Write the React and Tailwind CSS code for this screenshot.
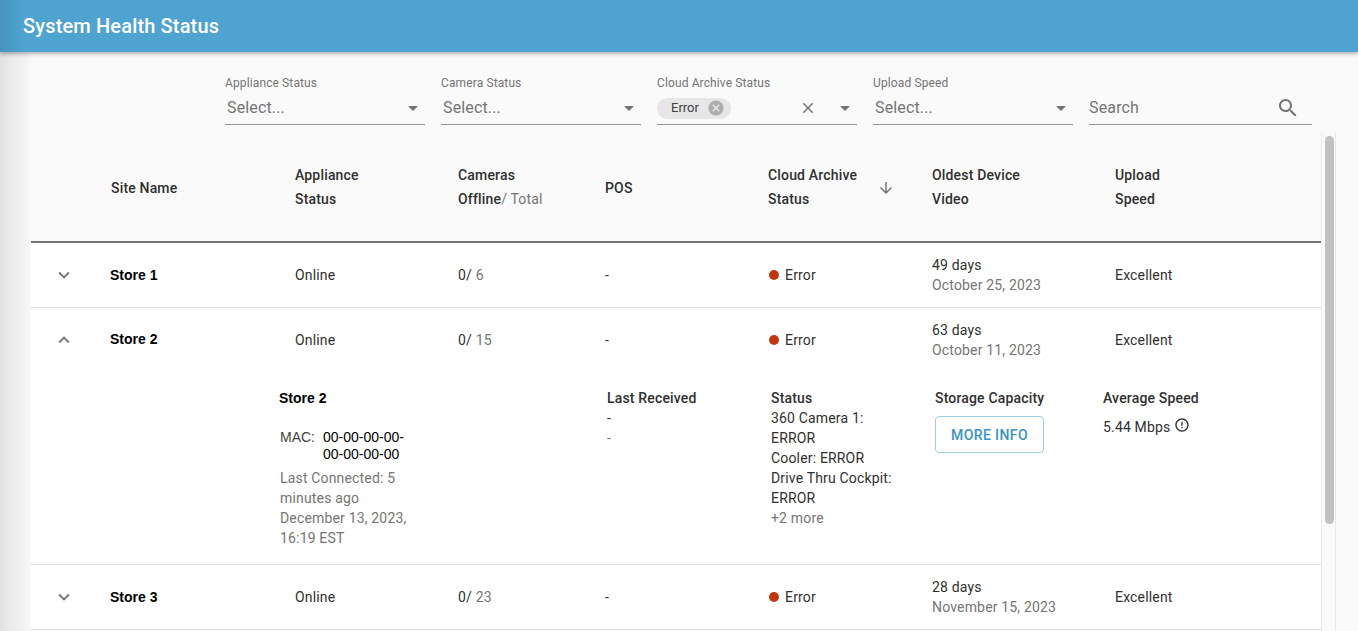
import React from "react";

const Icon = ({ d, className }) => (
  <svg viewBox="0 0 24 24" fill="currentColor" className={className}>
    <path d={d} />
  </svg>
);

const paths = {
  more: "M16.59 8.59 12 13.17 7.41 8.59 6 10l6 6 6-6z",
  less: "m12 8-6 6 1.41 1.41L12 10.83l4.59 4.58L18 14z",
  down: "M20 12l-1.41-1.41L13 16.17V4h-2v12.17l-5.58-5.59L4 12l8 8 8-8z",
  search:
    "M15.5 14h-.79l-.28-.27C15.41 12.59 16 11.11 16 9.5 16 5.91 13.09 3 9.5 3S3 5.91 3 9.5 5.91 16 9.5 16c1.61 0 3.09-.59 4.23-1.57l.27.28v.79l5 4.99L20.49 19l-4.99-5zm-6 0C7.01 14 5 11.99 5 9.5S7.01 5 9.5 5 14 7.01 14 9.5 11.99 14 9.5 14z",
  cancel:
    "M12 2C6.47 2 2 6.47 2 12s4.47 10 10 10 10-4.47 10-10S17.53 2 12 2zm5 13.59L15.59 17 12 13.41 8.41 17 7 15.59 10.59 12 7 8.41 8.41 7 12 10.59 15.59 7 17 8.41 13.41 12 17 15.59z",
  clear:
    "M19 6.41 17.59 5 12 10.59 6.41 5 5 6.41 10.59 12 5 17.59 6.41 19 12 13.41 17.59 19 19 17.59 13.41 12z",
  info: "M11 15h2v2h-2zm0-8h2v6h-2zm.99-5C6.47 2 2 6.48 2 12s4.47 10 9.99 10C17.52 22 22 17.52 22 12S17.52 2 11.99 2zM12 20c-4.42 0-8-3.58-8-8s3.58-8 8-8 8 3.58 8 8-3.58 8-8 8z",
};

const gridCols = "grid grid-cols-[79px_185px_163px_147px_163px_163px_184px_1fr]";

const Caret = () => (
  <span className="w-0 h-0 border-x-[5px] border-x-transparent border-t-[5px] border-t-[#757575]" />
);

const Filter = ({ label, children, clearable }) => (
  <div className="w-[200px] flex flex-col">
    <span className="text-xs leading-[14px] tracking-[0.12px] text-[#757575]">{label}</span>
    <div className="h-[28px] mt-[7px] pb-[5px] flex items-center border-b border-[#949494]">
      <div className="flex-1 min-w-0 flex items-center">
        {children || <span className="text-base tracking-[0.15px] text-[#757575] pl-[2px]">Select...</span>}
      </div>
      {clearable && <Icon d={paths.clear} className="w-[18px] h-[18px] text-[#757575] mr-[23px]" />}
      <span className="mr-[7px] flex">
        <Caret />
      </span>
    </div>
  </div>
);

const stores = [
  { name: "Store 1", total: 6, days: "49 days", date: "October 25, 2023" },
  { name: "Store 2", total: 15, days: "63 days", date: "October 11, 2023", open: true },
  { name: "Store 3", total: 23, days: "28 days", date: "November 15, 2023" },
];

const Details = () => (
  <div className="pl-[248px] pb-4 pt-[16px] grid grid-cols-[328px_164px_164px_168px_1fr] text-sm leading-5 tracking-[0.17px] text-[#303030]">
    <div>
      <div className="font-['Liberation_Sans'] font-bold tracking-normal text-black">Store 2</div>
      <div className="w-[140px] mt-[21px] ml-px">
        <div className="flex gap-2 font-['Liberation_Sans'] leading-[17px] tracking-normal">
          <span className="text-[#424242]">MAC:</span>
          <span className="text-black w-[90px]">00-00-00-00-00-00-00-00</span>
        </div>
        <div className="mt-[5px] text-[#757575]">Last Connected: 5 minutes ago December 13, 2023, 16:19 EST</div>
      </div>
    </div>
    <div>
      <div className="font-medium">Last Received</div>
      <div>-</div>
      <div className="text-[#757575]">-</div>
    </div>
    <div className="w-[125px]">
      <div className="font-medium">Status</div>
      <div>360 Camera 1: ERROR</div>
      <div>Cooler: ERROR</div>
      <div>Drive Thru Cockpit: ERROR</div>
      <div className="text-[#757575]">+2 more</div>
    </div>
    <div>
      <div className="font-medium">Storage Capacity</div>
      <button className="mt-2 w-[109px] h-[37px] rounded border border-[#9fcde6] text-[#3a93c4] text-sm font-medium tracking-[0.4px]">
        MORE INFO
      </button>
    </div>
    <div>
      <div className="font-medium">Average Speed</div>
      <div className="mt-[9px] flex items-start gap-1">
        <span>5.44 Mbps</span>
        <Icon d={paths.info} className="w-4 h-4 text-[#303030]" />
      </div>
    </div>
  </div>
);

const StoreRow = ({ store }) => (
  <div className="border-b border-[#e0e0e0] bg-white">
    <div className={`${gridCols} h-[64px] items-center text-sm tracking-[0.17px] text-[#303030]`}>
      <div className="pl-[22px] flex">
        <Icon d={store.open ? paths.less : paths.more} className="w-[22px] h-[22px] text-[#757575]" />
      </div>
      <div className={`font-['Liberation_Sans'] font-bold tracking-normal text-black ${store.open ? "pb-[2px]" : ""}`}>
        {store.name}
      </div>
      <div>Online</div>
      <div>
        0/<span className="text-[#757575]"> {store.total}</span>
      </div>
      <div>-</div>
      <div className="flex items-center gap-[6px] pl-px">
        <span className="w-[10px] h-[10px] rounded-full bg-[#c1360f]" />
        Error
      </div>
      <div className="leading-5 pl-px">
        <div>{store.days}</div>
        <div className="text-[#757575]">{store.date}</div>
      </div>
      <div>Excellent</div>
    </div>
    {store.open && <Details />}
  </div>
);

export default function App() {
  return (
    <div className="h-[631px] overflow-hidden flex flex-col font-['Roboto',sans-serif] bg-[linear-gradient(to_right,#e2e2e2,#fafafa_34px)]">
      <header className="h-[52px] shrink-0 flex items-center pl-[23px] pb-px bg-[linear-gradient(to_right,#4693bd,#4fa3d1_22px)] shadow-[0_2px_4px_rgba(0,0,0,0.3)] z-10">
        <h1 className="text-xl font-medium text-white tracking-[0.15px]">System Health Status</h1>
      </header>

      <div className="h-[81px] shrink-0 pl-[225px] pr-[46px] pt-[24px] flex gap-4">
        <Filter label="Appliance Status" />
        <Filter label="Camera Status" />
        <Filter label="Cloud Archive Status" clearable>
          <span className="h-[21px] pl-[14px] pr-[6px] flex items-center gap-[8px] rounded-full bg-[#e6e6e6] text-[13px] text-[#424242]">
            Error
            <Icon d={paths.cancel} className="w-[18px] h-[18px] text-[#adadad]" />
          </span>
        </Filter>
        <Filter label="Upload Speed" />
        <div className="flex-1 pt-[21px]">
          <div className="h-[28px] pb-[5px] flex items-center justify-between border-b border-[#949494]">
            <span className="text-base tracking-[0.15px] text-[#757575]">Search</span>
            <Icon d={paths.search} className="w-6 h-6 text-[#757575] mr-[12px]" />
          </div>
        </div>
      </div>

      <div className="flex-1 min-h-0 ml-[31px] flex overflow-hidden">
        <div className="w-[1290px] mt-[2px] shrink-0 border-l border-[#ececec] -ml-px box-content">
          <div className={`${gridCols} h-[108px] pb-[2px] items-center border-b-2 border-[#757575] text-sm font-medium leading-6 tracking-[0.17px] text-[#303030]`}>
            <div />
            <div className="pl-px pt-[2px]">Site Name</div>
            <div>
              Appliance
              <br />
              Status
            </div>
            <div>
              Cameras
              <br />
              Offline<span className="font-normal text-[#757575]">/ Total</span>
            </div>
            <div className="pt-[2px]">POS</div>
            <div className="relative">
              Cloud Archive
              <br />
              Status
              <Icon d={paths.down} className="absolute left-[109px] top-[16px] w-[18px] h-[18px] text-[#757575]" />
            </div>
            <div className="pl-px">
              Oldest Device
              <br />
              Video
            </div>
            <div>
              Upload
              <br />
              Speed
            </div>
          </div>
          {stores.map((s) => (
            <StoreRow key={s.name} store={s} />
          ))}
        </div>
        <div className="w-[15px] pt-[3px] pl-[3px] border-x border-[#e8e8e8]">
          <div className="w-[9px] h-[388px] rounded-full bg-[#c1c1c1]" />
        </div>
      </div>
    </div>
  );
}
